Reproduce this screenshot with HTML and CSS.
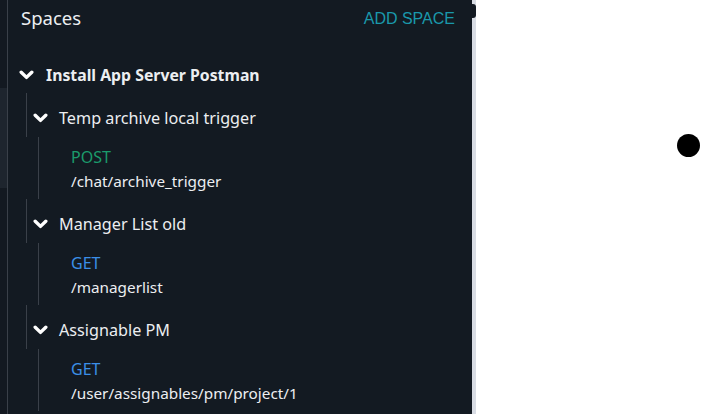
FILE: index.html
```html
<!DOCTYPE html>
<html lang="en">
<head>
    <meta charset="UTF-8">
    <meta name="viewport" content="width=device-width, initial-scale=1.0">
    <title>Spaces</title>
    <link rel="stylesheet" href="styles.css">
</head>
<body>

    <!-- Left rail -->
    <div class="rail">
        <div class="rail-active"></div>
    </div>

    <!-- Spaces panel -->
    <div class="panel">
        <div class="panel-header">
            <span class="panel-title">Spaces</span>
            <span class="add-space">ADD SPACE</span>
        </div>

        <div class="tree">
            <div class="space-row">
                <svg class="chevron" viewBox="0 0 15 10"><polyline points="2.2,2.2 7.5,7.4 12.8,2.2"/></svg>
                <span class="space-name">Install App Server Postman</span>
            </div>

            <div class="request">
                <div class="request-row">
                    <svg class="chevron" viewBox="0 0 15 10"><polyline points="2.2,2.2 7.5,7.4 12.8,2.2"/></svg>
                    <span>Temp archive local trigger</span>
                </div>
                <div class="request-body">
                    <div class="method post">POST</div>
                    <div class="path">/chat/archive_trigger</div>
                </div>
            </div>

            <div class="request">
                <div class="request-row">
                    <svg class="chevron" viewBox="0 0 15 10"><polyline points="2.2,2.2 7.5,7.4 12.8,2.2"/></svg>
                    <span>Manager List old</span>
                </div>
                <div class="request-body">
                    <div class="method get">GET</div>
                    <div class="path">/managerlist</div>
                </div>
            </div>

            <div class="request">
                <div class="request-row">
                    <svg class="chevron" viewBox="0 0 15 10"><polyline points="2.2,2.2 7.5,7.4 12.8,2.2"/></svg>
                    <span>Assignable PM</span>
                </div>
                <div class="request-body">
                    <div class="method get">GET</div>
                    <div class="path">/user/assignables/pm/project/1</div>
                </div>
            </div>
        </div>
    </div>

    <!-- Scroll track -->
    <div class="track">
        <div class="thumb"></div>
    </div>

    <!-- Canvas -->
    <div class="canvas">
        <div class="dot"></div>
    </div>

</body>
</html>
```

FILE: styles.css
```css
html, body {
    margin: 0;
    height: 100%;
}

body {
    display: flex;
    background-color: #ffffff;
    font-family: "Noto Sans", "Open Sans", sans-serif;
    overflow: hidden;
}

/* Left rail */
.rail {
    width: 7px;
    background-color: #131921;
    border-right: 1px solid #3a4049;
    padding-top: 88px;
    flex-shrink: 0;
}

.rail-active {
    height: 100px;
    background-color: #1e252e;
}

/* Panel */
.panel {
    width: 464px;
    background-color: #131a22;
    color: #eceef1;
    flex-shrink: 0;
}

.panel-header {
    height: 36px;
    display: flex;
    align-items: center;
    justify-content: space-between;
    padding: 0 17px 0 13px;
}

.panel-title {
    font-size: 18.5px;
    margin-top: -2px;
}

.add-space {
    font-family: "Liberation Sans", Arial, sans-serif;
    font-size: 16px;
    color: #1a98ab;
    margin-top: 1px;
}

.chevron {
    width: 15px;
    height: 10px;
    fill: none;
    stroke: #ffffff;
    stroke-width: 3.4;
    stroke-linecap: round;
    stroke-linejoin: round;
    flex-shrink: 0;
}

.space-row {
    height: 36px;
    margin-top: 21px;
    display: flex;
    align-items: center;
    padding-left: 11px;
    gap: 12px;
}

.space-name {
    font-weight: bold;
    font-size: 15.8px;
}

/* Requests */
.request {
    margin-left: 18px;
}

.request-row {
    height: 38px;
    display: flex;
    align-items: center;
    gap: 11px;
    border-left: 1px solid #3a4049;
    padding: 6px 0 0 6px;
    font-size: 16.2px;
}

.request-body {
    margin-left: 12px;
    border-left: 1px solid #3a4049;
    padding: 8px 0 6px 32px;
    height: 48px;
}

.method, .path {
    height: 24px;
    line-height: 24px;
    font-size: 15.3px;
}

.method {
    font-size: 16px;
}

.method.post {
    color: #1b9a6c;
}

.method.get {
    color: #3b8fe8;
}

/* Scroll track */
.track {
    width: 4px;
    background-color: #d8dce4;
    flex-shrink: 0;
}

.thumb {
    margin-top: 4px;
    height: 14px;
    background-color: #131a22;
    border-radius: 0 3px 3px 0;
}

/* Canvas */
.canvas {
    flex: 1;
    position: relative;
}

.dot {
    position: absolute;
    left: 201px;
    top: 134px;
    width: 23px;
    height: 23px;
    border-radius: 50%;
    background-color: #000000;
}
```
